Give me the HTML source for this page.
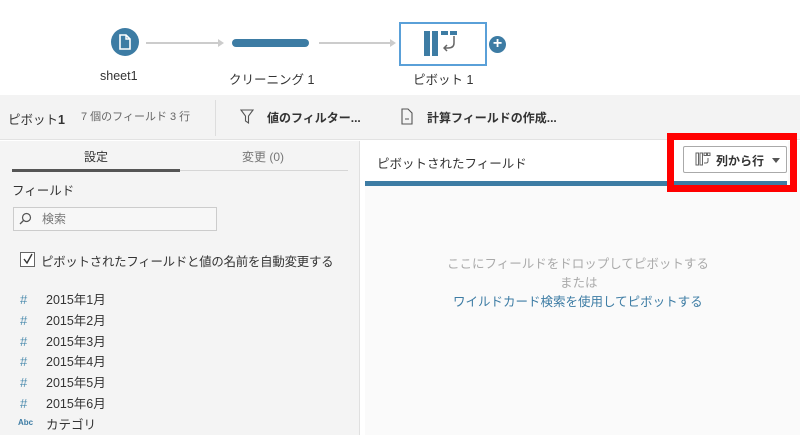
<!DOCTYPE html>
<html><head><meta charset="utf-8"><style>
*{margin:0;padding:0;box-sizing:border-box}
body{width:800px;height:435px;overflow:hidden;background:#fff;font-family:"Liberation Sans","Noto Sans CJK JP",sans-serif;color:#333;position:relative;font-size:13px}
.a{position:absolute;white-space:nowrap}
</style></head><body>
<div class="a" style="left:111px;top:28px;width:28px;height:28px;border-radius:50%;background:#3d7ca4"></div>
<svg class="a" style="left:118px;top:34px" width="14" height="16" viewBox="0 0 14 16"><path d="M2 1h6l4 4v10H2z" fill="none" stroke="#fff" stroke-width="1.6"/><path d="M8 1v4h4" fill="none" stroke="#fff" stroke-width="1.4"/></svg>
<div class="a" style="left:146px;top:42px;width:76px;height:2px;background:#ccc"></div>
<div class="a" style="left:218px;top:39px;border-left:6px solid #ccc;border-top:4px solid transparent;border-bottom:4px solid transparent"></div>
<div class="a" style="left:232px;top:39px;width:77px;height:8px;border-radius:4px;background:#3d7ca4"></div>
<div class="a" style="left:319px;top:42px;width:75px;height:2px;background:#ccc"></div>
<div class="a" style="left:390px;top:39px;border-left:6px solid #ccc;border-top:4px solid transparent;border-bottom:4px solid transparent"></div>
<div class="a" style="left:399px;top:22px;width:88px;height:44px;border:2px solid #5aa0d8;background:#fff"></div>
<div class="a" style="left:424px;top:31px;width:6px;height:25px;background:#3d7ca4"></div>
<div class="a" style="left:432px;top:31px;width:6px;height:25px;background:#3d7ca4"></div>
<div class="a" style="left:441px;top:31px;width:7px;height:4px;background:#3d7ca4"></div>
<div class="a" style="left:450px;top:31px;width:7px;height:4px;background:#3d7ca4"></div>
<svg class="a" style="left:443px;top:36px" width="16" height="16" viewBox="0 0 16 16"><path d="M11 0v7q0 5-6 5H1M4 9l-3 3 3 3" fill="none" stroke="#666" stroke-width="1.5"/></svg>
<div class="a" style="left:489px;top:36px;width:17px;height:17px;border-radius:50%;background:#3d7ca4;color:#fff;font-size:16px;line-height:16px;text-align:center;font-weight:bold">+</div>
<div class="a" style="left:100px;top:69px;font-size:12.5px">sheet1</div>
<div class="a" style="left:229px;top:69px;font-size:12.5px">クリーニング 1</div>
<div class="a" style="left:413px;top:69px;font-size:12.5px">ピボット 1</div>
<div class="a" style="left:0;top:95px;width:800px;height:45px;background:#f3f3f3;border-bottom:1px solid #e2e2e2"></div>
<div class="a" style="left:8px;top:109px;font-size:12.5px">ピボット<b>1</b></div>
<div class="a" style="left:81px;top:108px;font-size:11px;color:#666">7 個のフィールド 3 行</div>
<div class="a" style="left:215px;top:100px;width:1px;height:36px;background:#ddd"></div>
<svg class="a" style="left:240px;top:108px" width="14" height="17" viewBox="0 0 14 17"><path d="M1 2h12L8.5 8v7L5.5 13V8z" fill="none" stroke="#555" stroke-width="1.1"/></svg>
<div class="a" style="left:267px;top:109px;font-weight:bold;font-size:12px">値のフィルター...</div>
<svg class="a" style="left:400px;top:108px" width="14" height="17" viewBox="0 0 14 17"><path d="M2 1h6l4 4v11H2z" fill="none" stroke="#555" stroke-width="1.1"/><path d="M5 11h4" stroke="#555"/></svg>
<div class="a" style="left:427px;top:109px;font-weight:bold;font-size:12px">計算フィールドの作成...</div>
<div class="a" style="left:0;top:141px;width:360px;height:294px;background:#f4f4f4;border-right:1px solid #e0e0e0"></div>
<div class="a" style="left:84px;top:148px;font-size:12px">設定</div>
<div class="a" style="left:242px;top:148px;font-size:12px;color:#777">変更 (0)</div>
<div class="a" style="left:12px;top:170px;width:336px;height:1px;background:#d6d6d6"></div>
<div class="a" style="left:12px;top:169px;width:168px;height:3px;background:#555"></div>
<div class="a" style="left:12px;top:180px;font-size:12.5px">フィールド</div>
<div class="a" style="left:13px;top:207px;width:204px;height:24px;border:1px solid #ccc;background:#f7f7f7"></div>
<svg class="a" style="left:19px;top:212px" width="13" height="13" viewBox="0 0 13 13"><circle cx="7.5" cy="5.5" r="4" fill="none" stroke="#555" stroke-width="1.2"/><path d="M4.5 8.5L1 12" stroke="#555" stroke-width="1.3"/></svg>
<div class="a" style="left:42px;top:210px;font-size:12px;color:#777">検索</div>
<div class="a" style="left:20px;top:252px;width:15px;height:15px;border:1px solid #666;background:#fff"></div>
<svg class="a" style="left:22px;top:253px" width="12" height="12" viewBox="0 0 12 12"><path d="M2 6l3 4 5-9" fill="none" stroke="#333" stroke-width="1.4"/></svg>
<div class="a" style="left:41px;top:252px;font-size:12.4px;letter-spacing:-0.2px">ピボットされたフィールドと値の名前を自動変更する</div>
<div class="a" style="left:20px;top:290px;font-size:13px;line-height:20.8px;color:#4d8cae">#<br>#<br>#<br>#<br>#<br>#</div>
<div class="a" style="left:18px;top:418px;font-size:8px;color:#3d7ca4;font-weight:bold">Abc</div>
<div class="a" style="left:46px;top:290px;font-size:12.5px;line-height:20.8px">2015年1月<br>2015年2月<br>2015年3月<br>2015年4月<br>2015年5月<br>2015年6月<br>カテゴリ</div>
<div class="a" style="left:365px;top:141px;width:435px;height:294px;background:#fafafa"></div>
<div class="a" style="left:365px;top:141px;width:423px;height:40px;background:#fff"></div>
<div class="a" style="left:377px;top:153px;font-size:12.5px">ピボットされたフィールド</div>
<div class="a" style="left:365px;top:181px;width:422px;height:5px;background:#3d7ca4"></div>
<div class="a" style="left:683px;top:146px;width:104px;height:27px;border:1px solid #aaa;border-radius:2px;background:#fff"></div>
<svg class="a" style="left:695px;top:152px" width="16" height="15" viewBox="0 0 16 15"><rect x="1" y="1" width="2.5" height="12" fill="none" stroke="#666"/><rect x="5" y="1" width="2.5" height="12" fill="none" stroke="#666"/><rect x="9" y="1" width="2.5" height="2.5" fill="none" stroke="#666"/><rect x="12.5" y="1" width="2.5" height="2.5" fill="none" stroke="#666"/><path d="M13 6v3q0 2-2 2H9" fill="none" stroke="#666"/></svg>
<div class="a" style="left:716px;top:152px;font-weight:bold;font-size:12px">列から行</div>
<div class="a" style="left:772px;top:158px;border-top:5px solid #555;border-left:4px solid transparent;border-right:4px solid transparent"></div>
<div class="a" style="left:667px;top:133px;width:130px;height:59px;border:7px solid #f00"></div>
<div class="a" style="left:447px;top:253px;font-size:12.5px;color:#aaa">ここにフィールドをドロップしてピボットする</div>
<div class="a" style="left:560px;top:272px;font-size:12.5px;color:#aaa">または</div>
<div class="a" style="left:453px;top:291px;font-size:12.5px;color:#3d7ca4">ワイルドカード検索を使用してピボットする</div>
</body></html>
